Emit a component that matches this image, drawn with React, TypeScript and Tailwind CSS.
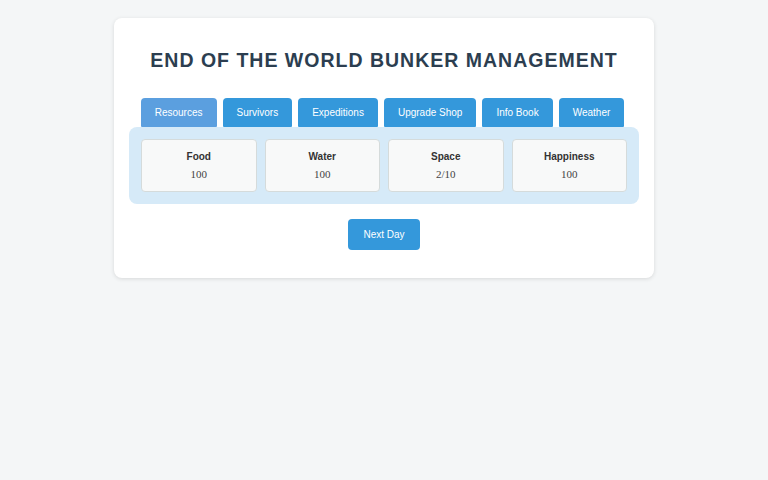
import React from "react";

const tabs = ["Resources", "Survivors", "Expeditions", "Upgrade Shop", "Info Book", "Weather"];
const stats = [
  { label: "Food", value: "100" },
  { label: "Water", value: "100" },
  { label: "Space", value: "2/10" },
  { label: "Happiness", value: "100" },
];

export default function App() {
  return (
    <div className="min-h-[480px] w-full bg-[#f4f6f7] pt-[18px] font-['Liberation_Sans',Arial,sans-serif]">
      <div className="mx-auto w-[540px] rounded-lg bg-white px-[15px] pt-[30px] pb-[28px] shadow-[0_1px_4px_rgba(0,0,0,0.12)]">
        <h1 className="text-center text-[19.5px] font-bold leading-[24px] tracking-[1px] text-[#2c3e50]">
          END OF THE WORLD BUNKER MANAGEMENT
        </h1>
        <div className="mt-[26px] flex justify-center gap-[6px] pr-[3px]">
          {tabs.map((t, i) => (
            <button
              key={t}
              className={`h-[29px] whitespace-nowrap rounded-t-[4px] rounded-b-[1px] px-[14px] text-[10px] text-white ${
                i === 0 ? "bg-[#5b9fdf]" : "bg-[#3498db]"
              }`}
            >
              {t}
            </button>
          ))}
        </div>
        <div className="grid grid-cols-4 gap-[8px] rounded-lg bg-[#d6eaf8] p-[12px]">
          {stats.map((s) => (
            <div
              key={s.label}
              className="flex h-[53px] flex-col items-center rounded-[4px] border border-[#d5dbdb] bg-[#f8f9f9] pt-[10px]"
            >
              <div className="text-[10px] font-bold leading-[13px] text-[#333]">{s.label}</div>
              <div className="mt-[5px] font-['Liberation_Serif',serif] text-[11px] leading-[13px] text-[#444]">
                {s.value}
              </div>
            </div>
          ))}
        </div>
        <div className="mt-[15px] flex justify-center">
          <button className="h-[31px] w-[72px] rounded-[4px] bg-[#3498db] text-[10px] text-white">Next Day</button>
        </div>
      </div>
    </div>
  );
}
